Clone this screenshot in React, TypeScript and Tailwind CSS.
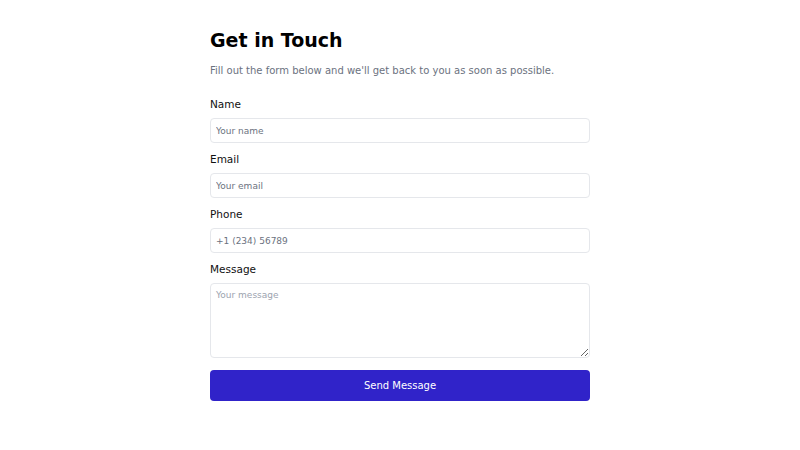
import React from "react";

function Field({ label, placeholder, first }: { label: string; placeholder: string; first?: boolean }) {
  return (
    <div className={first ? "flex flex-col" : "mt-[9px] flex flex-col"}>
      <label className="text-[10.5px] leading-[14px] text-[#111]">{label}</label>
      <input
        className="mt-[7px] h-[25px] rounded-[4px] border border-[#e5e7eb] px-[5px] text-[9px] text-[#111] placeholder:text-[#6b7280] outline-none"
        placeholder={placeholder}
      />
    </div>
  );
}

export default function App() {
  return (
    <div className="min-h-[450px] w-full bg-white">
      <div className="mx-auto w-[380px] pt-[27px] font-['DejaVu_Sans',sans-serif]">
        <h1 className="text-[19px] font-bold leading-[26px] text-black">Get in Touch</h1>
        <p className="mt-[10px] text-[10px] leading-[16px] text-[#6b7280]">
          Fill out the form below and we'll get back to you as soon as possible.
        </p>
        <form className="mt-[18px] flex flex-col" onSubmit={(e) => e.preventDefault()}>
          <Field first label="Name" placeholder="Your name" />
          <Field label="Email" placeholder="Your email" />
          <Field label="Phone" placeholder="+1 (234) 56789" />
          <div className="mt-[9px] flex flex-col">
            <label className="text-[10.5px] leading-[14px] text-[#111]">Message</label>
            <textarea
              className="mt-[7px] h-[75px] rounded-[4px] border border-[#e5e7eb] px-[5px] py-[5px] text-[9px] text-[#111] placeholder:text-[#9ca3af] outline-none"
              placeholder="Your message"
            />
          </div>
          <button
            type="submit"
            className="mt-[12px] h-[31px] rounded-[4px] bg-[#3023c9] text-[10px] text-white"
          >
            Send Message
          </button>
        </form>
      </div>
    </div>
  );
}
